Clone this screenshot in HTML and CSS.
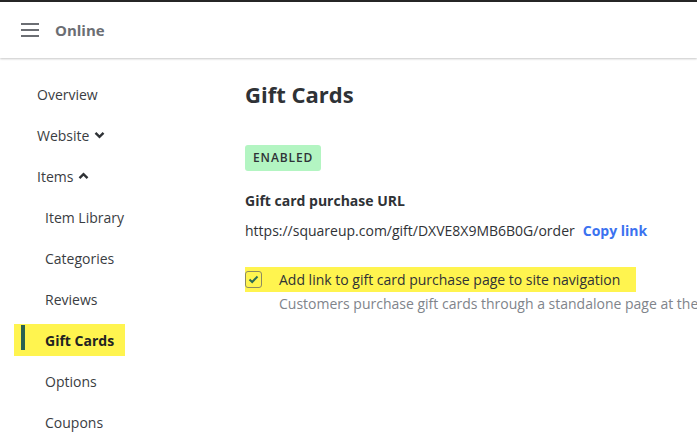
FILE: index.html
```html
<!DOCTYPE html>
<html>
<head>
<meta charset="utf-8">
<link rel="stylesheet" href="styles.css">
</head>
<body>
<div class="topline"></div>
<header class="header">
  <svg class="burger" width="18" height="14" viewBox="0 0 18 14"><rect x="0" y="0" width="18" height="2" fill="#6b6e73"/><rect x="0" y="6" width="18" height="2" fill="#6b6e73"/><rect x="0" y="12" width="18" height="2" fill="#6b6e73"/></svg>
  <span class="brand">Online</span>
</header>
<div class="layout">
  <nav class="side">
    <div class="nav-item">Overview</div>
    <div class="nav-item">Website <svg class="chev" width="11" height="8" viewBox="0 0 11 8"><path d="M1.5 1.8 L5.5 5.8 L9.5 1.8" fill="none" stroke="#2f3236" stroke-width="2.4"/></svg></div>
    <div class="nav-item">Items <svg class="chev" width="11" height="8" viewBox="0 0 11 8"><path d="M1.5 6.2 L5.5 2.2 L9.5 6.2" fill="none" stroke="#2f3236" stroke-width="2.4"/></svg></div>
    <div class="nav-item sub">Item Library</div>
    <div class="nav-item sub">Categories</div>
    <div class="nav-item sub">Reviews</div>
    <div class="nav-item sub active"><span class="bar"></span>Gift Cards</div>
    <div class="nav-item sub">Options</div>
    <div class="nav-item sub">Coupons</div>
  </nav>
  <main class="main">
    <h1 class="title">Gift Cards</h1>
    <span class="badge">ENABLED</span>
    <div class="label">Gift card purchase URL</div>
    <div class="url-row"><span class="url">https://squareup.com/gift/DXVE8X9MB6B0G/order</span><span class="copy">Copy link</span></div>
    <div class="check-row">
      <span class="box"><svg width="11" height="9" viewBox="0 0 11 9"><path d="M1.5 4.5 L4.2 7 L9.5 1.5" fill="none" stroke="#2c6b55" stroke-width="2"/></svg></span>
      <span class="check-label">Add link to gift card purchase page to site navigation</span>
    </div>
    <div class="desc">Customers purchase gift cards through a standalone page at the</div>
  </main>
</div>
</body>
</html>
```
FILE: styles.css
```css
* { box-sizing: border-box; }
html, body { margin: 0; padding: 0; background: #fff; overflow: hidden; }
body { font-family: "Open Sans", "Liberation Sans", sans-serif; color: #3a3d42; width: 697px; height: 432px; }
.topline { height: 2px; background: #262626; }
.header { height: 56px; display: flex; align-items: center; padding-left: 21px; background: #fff; box-shadow: 0 1px 2px rgba(0,0,0,0.22); position: relative; }
.burger { display: block; margin-right: 16px; margin-top: -1px; }
.brand { font-weight: 700; font-size: 15px; color: #6b6e73; }
.layout { display: flex; }
.side { width: 245px; padding-top: 20px; padding-left: 14px; flex-shrink: 0; }
.nav-item { height: 32px; margin-bottom: 9px; display: flex; align-items: center; padding-left: 23px; font-size: 14px; color: #3a3d42; width: 111px; white-space: nowrap; }
.nav-item.sub { padding-left: 31px; }
.chev { margin-left: 5px; }
.nav-item.active { background: #fff44f; font-weight: 700; color: #222; position: relative; }
.bar { position: absolute; left: 7px; top: 1px; width: 4px; height: 25px; background: #2a6251; }
.main { padding-top: 21px; min-width: 0; flex: 1; overflow: hidden; }
.title { margin: 0; font-size: 22px; font-weight: 700; color: #2f3236; line-height: 30px; }
.badge { display: inline-block; margin-top: 36px; background: #b3f5c2; color: #2f3236; font-size: 12px; font-weight: 600; letter-spacing: 0.9px; padding: 0 8px; height: 26px; line-height: 26px; border-radius: 3px; }
.label { margin-top: 20px; font-weight: 700; font-size: 14px; color: #2f3236; }
.url-row { margin-top: 11px; font-size: 14px; display: flex; align-items: baseline; }
.url { color: #2f3236; }
.copy { color: #3b72f0; font-weight: 700; margin-left: 8px; font-size: 14px; }
.check-row { margin-top: 27px; margin-left: -11px; display: flex; align-items: center; background: #fff44f; width: 402px; height: 25px; padding-left: 11px; }
.box { width: 17px; height: 17px; border: 1px solid #8d8a60; border-radius: 3px; display: flex; align-items: center; justify-content: center; }
.check-label { margin-left: 17px; font-size: 14px; color: #2f3236; }
.desc { margin-top: 2px; margin-left: 34px; font-size: 14px; color: #80848b; white-space: nowrap; }
```
